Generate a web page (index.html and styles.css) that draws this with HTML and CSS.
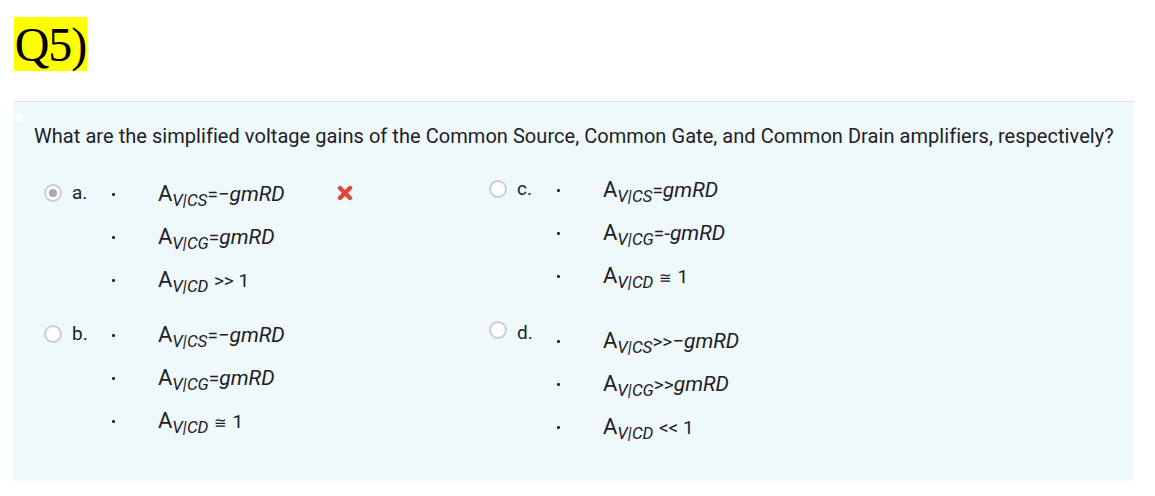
FILE: index.html
```html
<!DOCTYPE html>
<html>
<head>
<meta charset="utf-8">
<link rel="stylesheet" href="styles.css">
</head>
<body>
<div class="title"><span class="qnum">Q5)</span></div>
<div class="panel">
  <span class="dot"></span>
  <p class="question">What are the simplified voltage gains of the Common Source, Common Gate, and Common Drain amplifiers, respectively?</p>
  <div class="options">
    <div class="opt opt-a">
      <span class="radio checked"></span>
      <span class="label">a.</span>
      <ul class="list">
        <li><span class="f">A<sub>V|CS</sub><span class="op">=</span><i>−gmRD</i></span>
          <svg class="wrong" width="16" height="16" viewBox="0 0 16 16"><path d="M3 3 L13 13 M13 3 L3 13" stroke="#e0443a" stroke-width="4.4" stroke-linecap="round"/></svg></li>
        <li><span class="f">A<sub>V|CG</sub><span class="op">=</span><i>gmRD</i></span></li>
        <li><span class="f">A<sub>V|CD</sub> <span class="n">&gt;&gt; 1</span></span></li>
      </ul>
    </div>
    <div class="opt opt-c">
      <span class="radio"></span>
      <span class="label">c.</span>
      <ul class="list">
        <li><span class="f">A<sub>V|CS</sub><span class="op">=</span><i>gmRD</i></span></li>
        <li><span class="f">A<sub>V|CG</sub><span class="op">=</span><i>-gmRD</i></span></li>
        <li><span class="f">A<sub>V|CD</sub> <span class="cong">≅</span> <span class="n">1</span></span></li>
      </ul>
    </div>
    <div class="opt opt-b">
      <span class="radio"></span>
      <span class="label">b.</span>
      <ul class="list">
        <li><span class="f">A<sub>V|CS</sub><span class="op">=</span><i>−gmRD</i></span></li>
        <li><span class="f">A<sub>V|CG</sub><span class="op">=</span><i>gmRD</i></span></li>
        <li><span class="f">A<sub>V|CD</sub> <span class="cong">≅</span> <span class="n">1</span></span></li>
      </ul>
    </div>
    <div class="opt opt-d">
      <span class="radio"></span>
      <span class="label">d.</span>
      <ul class="list list-low">
        <li><span class="f">A<sub>V|CS</sub><span class="op">&gt;&gt;</span><i>−gmRD</i></span></li>
        <li><span class="f">A<sub>V|CG</sub><span class="op">&gt;&gt;</span><i>gmRD</i></span></li>
        <li><span class="f">A<sub>V|CD</sub> <span class="n">&lt;&lt; 1</span></span></li>
      </ul>
    </div>
  </div>
</div>
</body>
</html>
```
FILE: styles.css
```css
html, body {
  margin: 0;
  padding: 0;
  background: #ffffff;
}
body {
  width: 1155px;
  height: 496px;
  overflow: hidden;
}
.title {
  padding: 17px 0 0 14px;
  height: 54px;
}
.qnum {
  display: inline-block;
  background: #ffff00;
  font-family: "Liberation Serif", serif;
  font-size: 48px;
  line-height: 56px;
  height: 54px;
  width: 73px;
  color: #000;
  letter-spacing: -1px;
  text-align: center;
}
.panel {
  position: relative;
  margin: 30px 0 0 14px;
  width: 1120px;
  height: 380px;
  background: #eff8fb;
  border-top: 1px solid #d4e8f1;
  box-sizing: border-box;
  padding: 20px 0 0 20px;
  font-family: Roboto, "Liberation Sans", sans-serif;
  color: #1d2125;
}
.dot {
  position: absolute;
  left: 1px;
  top: 11px;
  width: 8px;
  height: 8px;
  border-radius: 50%;
  background: #ffffff;
  opacity: 0.8;
}
.question {
  margin: 0;
  font-size: 20px;
  line-height: 28px;
  letter-spacing: 0.05px;
}
.options {
  display: grid;
  grid-template-columns: 445px 445px;
  margin: 33px 0 0 10px;
  row-gap: 12px;
}
.opt {
  display: flex;
  align-items: flex-start;
}
.opt-c, .opt-d {
  margin-top: -4px;
}
.radio {
  width: 18px;
  height: 18px;
  box-sizing: border-box;
  border: 2px solid #c9cdd1;
  border-radius: 50%;
  background: #ffffff;
  margin-top: 1px;
  flex: none;
  position: relative;
}
.radio.checked::after {
  content: "";
  position: absolute;
  left: 3px;
  top: 3px;
  width: 8px;
  height: 8px;
  border-radius: 50%;
  background: #a7a9ae;
}
.label {
  font-size: 19px;
  line-height: 20px;
  margin-left: 10px;
  width: 40px;
  flex: none;
}
.opt-d .label {
  margin-top: 3px;
}
.list {
  list-style: none;
  margin: 0;
  padding: 0;
}
.list-low {
  margin-top: 10px;
}
.list li {
  position: relative;
  height: 43px;
  padding-left: 46px;
  display: flex;
  align-items: flex-start;
  font-size: 22px;
  line-height: 22px;
}
.list li::before {
  content: "";
  position: absolute;
  left: 0;
  top: 10px;
  width: 2.5px;
  height: 2.5px;
  border-radius: 50%;
  background: #222;
}
.f {
  white-space: nowrap;
  color: #1d2125;
}
.f sub {
  font-style: italic;
  font-size: 17px;
  vertical-align: -5px;
  line-height: 0;
}
.f i {
  font-style: italic;
  font-size: 21px;
}
.op {
  font-size: 19px;
}
.n {
  font-size: 19px;
}
.cong {
  font-size: 15px;
}
.wrong {
  margin-left: 52px;
  margin-top: 2px;
}
```
